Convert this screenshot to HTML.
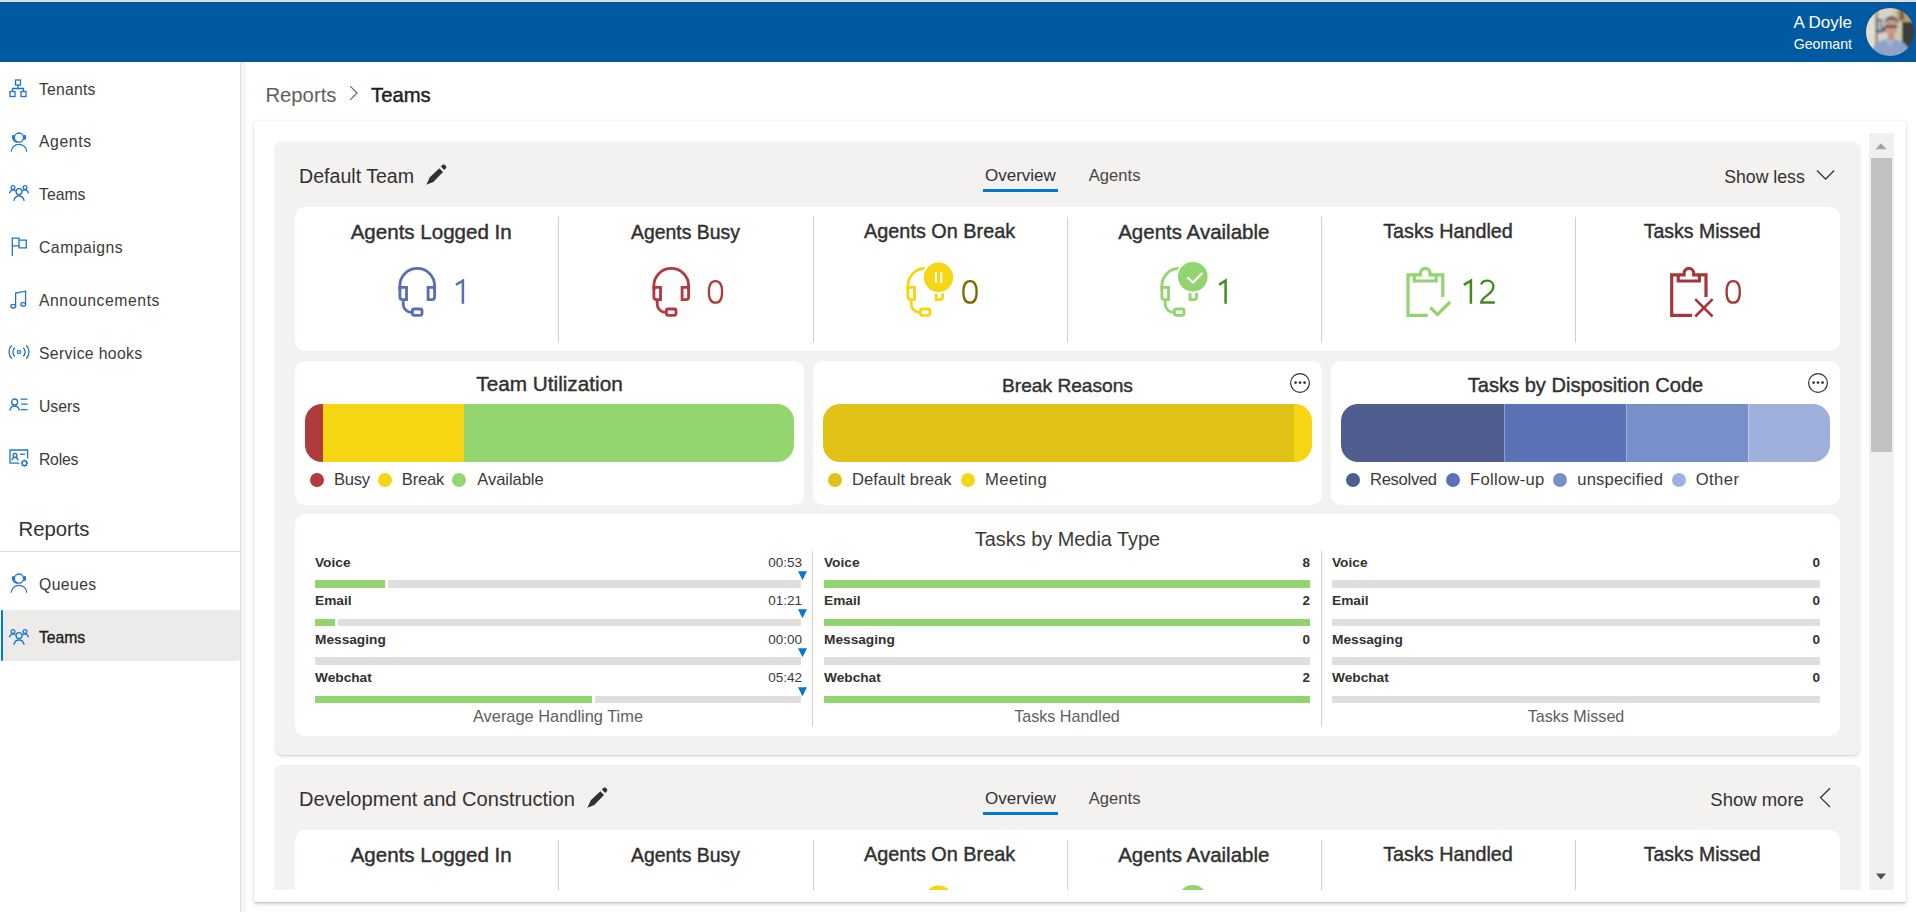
<!DOCTYPE html>
<html><head><meta charset="utf-8"><title>Teams</title>
<style>
html,body{margin:0;padding:0;}
body{width:1916px;height:912px;position:relative;overflow:hidden;background:#fff;font-family:"Liberation Sans",sans-serif;}
.t{position:absolute;line-height:1;white-space:pre;}
.r{position:absolute;}
</style></head><body>
<div class="r" style="left:0px;top:0px;width:1916px;height:2px;background:#dedfe1;"></div>
<div class="r" style="left:0px;top:2px;width:1916px;height:60px;background:#005aa1;"></div>
<div class="t" style="left:652.00px;width:1200px;text-align:right;top:14.31px;font-size:17px;font-weight:400;color:#ffffff;">A Doyle</div>
<div class="t" style="left:652.00px;width:1200px;text-align:right;top:36.88px;font-size:14.2px;font-weight:400;color:#ffffff;">Geomant</div>
<svg class="r" style="left:1866px;top:8px;" width="48" height="48" viewBox="0 0 48 48">
<defs><clipPath id="av"><circle cx="24" cy="24" r="24"/></clipPath><filter id="bl"><feGaussianBlur stdDeviation="0.8"/></filter></defs>
<g clip-path="url(#av)"><g filter="url(#bl)">
<rect x="-2" y="-2" width="52" height="52" fill="#cfc6b1"/>
<rect x="-2" y="-2" width="12" height="52" fill="#e3ddd0"/>
<rect x="9" y="-2" width="3" height="52" fill="#9d9384"/>
<rect x="12" y="-2" width="14" height="52" fill="#d8d3c6"/>
<rect x="10.5" y="11" width="6" height="14" fill="#55687a"/>
<rect x="11.5" y="13" width="4" height="9" fill="#a9b4bd"/>
<rect x="31" y="-2" width="19" height="16" fill="#b59a6e"/>
<rect x="34" y="-2" width="4" height="14" fill="#7b5f3a"/>
<rect x="36" y="14" width="14" height="30" fill="#3e3e3c"/>
<path d="M3 50 C5 38 12 33 19 31.5 L24 30 L29 31.5 C37 33 43 37 46 50 Z" fill="#8fa3c9"/>
<path d="M19 31.5 L24 38 L29 31.5 Z" fill="#a8b7d6"/>
<rect x="22" y="26" width="6" height="6" fill="#c08f80"/>
<ellipse cx="25" cy="19.5" rx="6.2" ry="8" fill="#c9988a"/>
<path d="M18.4 17 C18 10 22 8 25.5 8 C29.5 8 32.5 10.5 31.8 17 C30.5 13 28 12 25 12 C22 12 19.5 13 18.4 17Z" fill="#6e6963"/>
<rect x="18.5" y="17.2" width="13" height="2.6" rx="1" fill="#3b3835" opacity=".75"/>
<rect x="16.8" y="19" width="2" height="5" fill="#2d2d2d"/>
</g></g></svg>
<div class="r" style="left:240px;top:62px;width:1px;height:850px;background:#e1dfdd;"></div>
<div class="r" style="left:241px;top:62px;width:8px;height:850px;background:linear-gradient(90deg,rgba(0,0,0,.05),rgba(0,0,0,0));"></div>
<div class="t" style="left:39.00px;top:81.57px;font-size:15.75px;font-weight:400;color:#3b3a39;letter-spacing:0.2px;">Tenants</div>
<div class="t" style="left:39.00px;top:134.47px;font-size:15.75px;font-weight:400;color:#3b3a39;letter-spacing:0.6px;">Agents</div>
<div class="t" style="left:39.00px;top:187.37px;font-size:15.75px;font-weight:400;color:#3b3a39;letter-spacing:0px;">Teams</div>
<div class="t" style="left:39.00px;top:240.27px;font-size:15.75px;font-weight:400;color:#3b3a39;letter-spacing:0.5px;">Campaigns</div>
<div class="t" style="left:39.00px;top:293.17px;font-size:15.75px;font-weight:400;color:#3b3a39;letter-spacing:0.55px;">Announcements</div>
<div class="t" style="left:39.00px;top:346.07px;font-size:15.75px;font-weight:400;color:#3b3a39;letter-spacing:0.35px;">Service hooks</div>
<div class="t" style="left:39.00px;top:398.97px;font-size:15.75px;font-weight:400;color:#3b3a39;letter-spacing:0px;">Users</div>
<div class="t" style="left:39.00px;top:451.87px;font-size:15.75px;font-weight:400;color:#3b3a39;letter-spacing:-0.25px;">Roles</div>
<svg class="r" style="left:8px;top:78px;" width="22" height="22" viewBox="0 0 22 22"><g fill="none" stroke="#1f74c6" stroke-width="1.3">
<rect x="7.5" y="2" width="5" height="5"/><rect x="2" y="13.5" width="5" height="5"/><rect x="13" y="13.5" width="5" height="5"/>
<path d="M10 7v3.5M4.5 13.5v-3h11v3"/></g></svg>
<svg class="r" style="left:8px;top:131px;" width="22" height="22" viewBox="0 0 22 22"><g fill="none" stroke="#1f74c6" stroke-width="1.3">
<circle cx="11" cy="6.6" r="4.6"/>
<path d="M3.2 20.6c.6-4.4 3.8-7.2 7.8-7.2s7.2 2.8 7.8 7.2"/>
<rect x="4.6" y="4.6" width="1.4" height="3.6" rx=".7"/><rect x="16" y="4.6" width="1.4" height="3.6" rx=".7"/>
<path d="M5.4 8.4c.4 1.8 1.6 2.4 3.2 2.4"/></g><circle cx="8.8" cy="10.8" r="1" fill="#1f74c6"/></svg>
<svg class="r" style="left:8px;top:184px;" width="22" height="20" viewBox="0 0 22 20"><g fill="none" stroke="#1f74c6" stroke-width="1.3">
<circle cx="5" cy="3.6" r="1.9"/><circle cx="17" cy="3.6" r="1.9"/><circle cx="11" cy="7.6" r="3"/>
<path d="M1.4 9.2c.8-2.4 2-3.4 3.6-3.4 1.1 0 2 .5 2.6 1.4M20.6 9.2c-.8-2.4-2-3.4-3.6-3.4-1.1 0-2 .5-2.6 1.4"/>
<path d="M5.8 16.8c.7-3 2.6-4.8 5.2-4.8s4.5 1.8 5.2 4.8"/></g></svg>
<svg class="r" style="left:8px;top:236px;" width="22" height="22" viewBox="0 0 22 22"><g fill="none" stroke="#1f74c6" stroke-width="1.3">
<path d="M4.3 20V2.2h6.7v7.6H4.3"/><path d="M11 4.2h7.3v7.7H11V9.8"/></g></svg>
<svg class="r" style="left:8px;top:289px;" width="22" height="22" viewBox="0 0 22 22"><g fill="none" stroke="#1f74c6" stroke-width="1.3">
<ellipse cx="5.2" cy="17.2" rx="2.4" ry="1.8"/><ellipse cx="15.2" cy="15.4" rx="2.4" ry="1.8"/>
<path d="M7.6 17.2V4l10-1.8v13.2"/></g></svg>
<svg class="r" style="left:8px;top:344px;" width="22" height="18" viewBox="0 0 22 18"><g fill="none" stroke="#1f74c6" stroke-width="1.3">
<circle cx="11" cy="8" r="1.6"/>
<path d="M6.7 3.7a6 6 0 0 0 0 8.6M15.3 3.7a6 6 0 0 1 0 8.6"/>
<path d="M3.8 1.2a9.6 9.6 0 0 0 0 13.6M18.2 1.2a9.6 9.6 0 0 1 0 13.6"/></g></svg>
<svg class="r" style="left:8px;top:397px;" width="22" height="16" viewBox="0 0 22 16"><g fill="none" stroke="#1f74c6" stroke-width="1.3">
<circle cx="6.6" cy="5" r="3"/><path d="M1.8 13.6c.6-3 2.4-4.6 4.8-4.6s4.2 1.6 4.8 4.6"/>
<path d="M12.6 2.2h7M13 7.2h6.6M12.6 12.6h7"/></g></svg>
<svg class="r" style="left:8px;top:448px;" width="22" height="20" viewBox="0 0 22 20"><g fill="none" stroke="#1f74c6" stroke-width="1.3">
<path d="M11.4 15.2H2V2h17.6v8.5"/>
<circle cx="7" cy="7.4" r="1.9"/><path d="M3.8 12.4c.5-2 1.6-3 3.2-3s2.7 1 3.2 3"/>
<path d="M12 6.3h5"/>
<circle cx="16.4" cy="15.2" r="2.3"/>
<path d="M16.4 11.6v1.2M16.4 17.6v1.2M12.8 15.2h1.2M18.8 15.2h1.2M13.9 12.7l.8.8M18.1 16.9l.8.8M13.9 17.7l.8-.8M18.1 13.5l.8-.8"/></g></svg>
<div class="t" style="left:18.50px;top:518.62px;font-size:20.3px;font-weight:400;color:#323130;">Reports</div>
<div class="r" style="left:0px;top:551px;width:240px;height:1px;background:#e1dfdd;"></div>
<div class="t" style="left:39.00px;top:577.27px;font-size:15.75px;font-weight:400;color:#3b3a39;letter-spacing:0.4px;">Queues</div>
<svg class="r" style="left:8px;top:572px;" width="22" height="22" viewBox="0 0 22 22"><g fill="none" stroke="#1f74c6" stroke-width="1.3">
<circle cx="11" cy="6.6" r="4.6"/>
<path d="M3.2 20.6c.6-4.4 3.8-7.2 7.8-7.2s7.2 2.8 7.8 7.2"/>
<rect x="4.6" y="4.6" width="1.4" height="3.6" rx=".7"/><rect x="16" y="4.6" width="1.4" height="3.6" rx=".7"/>
<path d="M5.4 8.4c.4 1.8 1.6 2.4 3.2 2.4"/></g><circle cx="8.8" cy="10.8" r="1" fill="#1f74c6"/></svg>
<div class="r" style="left:2px;top:610px;width:238px;height:51px;background:#edebe9;border-radius:0 3px 3px 0;"></div>
<div class="r" style="left:1px;top:610px;width:2px;height:51px;background:#0078d4;border-radius:1px;"></div>
<div class="t" style="left:39.00px;top:630.11px;font-size:15.7px;font-weight:400;color:#201f1e;-webkit-text-stroke:0.35px #201f1e;">Teams</div>
<svg class="r" style="left:8px;top:628px;" width="22" height="20" viewBox="0 0 22 20"><g fill="none" stroke="#1f74c6" stroke-width="1.3">
<circle cx="5" cy="3.6" r="1.9"/><circle cx="17" cy="3.6" r="1.9"/><circle cx="11" cy="7.6" r="3"/>
<path d="M1.4 9.2c.8-2.4 2-3.4 3.6-3.4 1.1 0 2 .5 2.6 1.4M20.6 9.2c-.8-2.4-2-3.4-3.6-3.4-1.1 0-2 .5-2.6 1.4"/>
<path d="M5.8 16.8c.7-3 2.6-4.8 5.2-4.8s4.5 1.8 5.2 4.8"/></g></svg>
<div class="t" style="left:265.40px;top:84.62px;font-size:20.3px;font-weight:400;color:#605e5c;">Reports</div>
<svg class="r" style="left:348px;top:85px;" width="12" height="16" viewBox="0 0 12 16"><path d="M2.2 1.2l6.8 6.8-6.8 6.8" fill="none" stroke="#605e5c" stroke-width="1.1"/></svg>
<div class="t" style="left:371.00px;top:84.62px;font-size:20.3px;font-weight:400;color:#201f1e;-webkit-text-stroke:0.42px #201f1e;">Teams</div>
<div class="r" style="left:254px;top:121px;width:1652px;height:781px;background:#fff;border-radius:2px;box-shadow:0 1.6px 3.6px rgba(0,0,0,.13),0 0.3px 0.9px rgba(0,0,0,.11),0 3px 9px rgba(0,0,0,.05);"></div>
<div class="r" style="left:1869px;top:133px;width:25px;height:757px;background:#f0f0f0;"></div>
<div class="r" style="left:1871px;top:158px;width:21px;height:294px;background:#c1c1c1;"></div>
<svg class="r" style="left:1875px;top:141px;" width="12" height="10" viewBox="0 0 12 10"><path d="M0.5 8.2L6 2.2 11.5 8.2Z" fill="#a3a3a3"/></svg>
<svg class="r" style="left:1875px;top:871px;" width="12" height="10" viewBox="0 0 12 10"><path d="M1 2.5L6 8.5 11 2.5Z" fill="#505050"/></svg>
<div class="r" style="left:254px;top:133px;width:1614px;height:757px;overflow:hidden;">
<div class="r" style="left:21px;top:9px;width:1585px;height:613px;background:#f3f2f1;border-radius:8px;box-shadow:0 1.2px 3.6px rgba(0,0,0,.10),0 .3px .9px rgba(0,0,0,.08);"></div>
<div class="t" style="left:45.00px;top:33.91px;font-size:19.6px;font-weight:400;color:#323130;">Default Team</div>
<svg class="r" style="left:172px;top:31px;" width="22" height="22" viewBox="0 0 22 22"><path d="M0.3 20.7L3.8 13.3 13.3 4.2 17 8 7.3 17.9Z M14.8 2.6L17 .6C18.8 .2 20.6 2 20.3 3.8L18.2 6Z" fill="#323130"/></svg>
<div class="t" style="left:731.00px;top:33.81px;font-size:17px;font-weight:400;color:#323130;">Overview</div>
<div class="r" style="left:729px;top:56px;width:75px;height:3px;background:#0078d4;"></div>
<div class="t" style="left:834.80px;top:34.75px;font-size:16.6px;font-weight:400;color:#484644;">Agents</div>
<div class="t" style="left:1470.20px;top:35.62px;font-size:17.7px;font-weight:400;color:#323130;">Show less</div>
<svg class="r" style="left:1562px;top:36px;" width="20" height="14" viewBox="0 0 20 14"><path d="M1 1.5l8.6 8.6 8.6-8.6" fill="none" stroke="#323130" stroke-width="1.3"/></svg>
<div class="r" style="left:41px;top:74px;width:1545px;height:144px;background:#fff;border-radius:10px;"></div>
<div class="t" style="left:-422.80px;width:1200px;text-align:center;top:88.60px;font-size:20.55px;font-weight:400;color:#323130;-webkit-text-stroke:0.42px #323130;">Agents Logged In</div>
<div class="r" style="left:304px;top:84px;width:1px;height:125px;background:#d2d0ce;"></div>
<div class="t" style="left:-168.60px;width:1200px;text-align:center;top:89.58px;font-size:19.4px;font-weight:400;color:#323130;-webkit-text-stroke:0.42px #323130;">Agents Busy</div>
<div class="r" style="left:559px;top:84px;width:1px;height:125px;background:#d2d0ce;"></div>
<div class="t" style="left:85.60px;width:1200px;text-align:center;top:89.20px;font-size:19.85px;font-weight:400;color:#323130;-webkit-text-stroke:0.42px #323130;">Agents On Break</div>
<div class="r" style="left:813px;top:84px;width:1px;height:125px;background:#d2d0ce;"></div>
<div class="t" style="left:339.80px;width:1200px;text-align:center;top:88.65px;font-size:20.5px;font-weight:400;color:#323130;-webkit-text-stroke:0.42px #323130;">Agents Available</div>
<div class="r" style="left:1067px;top:84px;width:1px;height:125px;background:#d2d0ce;"></div>
<div class="t" style="left:594.00px;width:1200px;text-align:center;top:89.28px;font-size:19.75px;font-weight:400;color:#323130;-webkit-text-stroke:0.42px #323130;">Tasks Handled</div>
<div class="r" style="left:1321px;top:84px;width:1px;height:125px;background:#d2d0ce;"></div>
<div class="t" style="left:848.20px;width:1200px;text-align:center;top:89.49px;font-size:19.5px;font-weight:400;color:#323130;-webkit-text-stroke:0.42px #323130;">Tasks Missed</div>
<svg class="r" style="left:136px;top:127px;" width="60" height="62" viewBox="0 0 60 62"><g fill="none" stroke="#5a6eb3" stroke-width="2.85" stroke-linejoin="miter">
<path d="M9.9 30V25.7A17.35 17.35 0 0 1 44.6 25.7V30"/>
<path d="M9.9 27.4H16.5V39.6H12.6Q9.9 39.6 9.9 36.9Z"/>
<path d="M44.6 27.4H38.1V39.6H41.9Q44.6 39.6 44.6 36.9Z"/>
<path d="M13.2 40.5V44.3A8.2 8.2 0 0 0 21.6 52.3"/>
<rect x="22.4" y="49" width="9.6" height="6.3" rx="1.7"/></g></svg>
<svg class="r" style="left:-254px;top:-133px;" width="1916" height="320" viewBox="0 0 1916 320"><path d="M455.9 284.8L462.9 280.6V303.8" fill="none" stroke="#5a6eb3" stroke-width="2.5" stroke-linejoin="miter"/></svg>
<svg class="r" style="left:390px;top:127px;" width="60" height="62" viewBox="0 0 60 62"><g fill="none" stroke="#b03a3e" stroke-width="2.85" stroke-linejoin="miter">
<path d="M9.9 30V25.7A17.35 17.35 0 0 1 44.6 25.7V30"/>
<path d="M9.9 27.4H16.5V39.6H12.6Q9.9 39.6 9.9 36.9Z"/>
<path d="M44.6 27.4H38.1V39.6H41.9Q44.6 39.6 44.6 36.9Z"/>
<path d="M13.2 40.5V44.3A8.2 8.2 0 0 0 21.6 52.3"/>
<rect x="22.4" y="49" width="9.6" height="6.3" rx="1.7"/></g></svg>
<svg class="r" style="left:-254px;top:-133px;" width="1916" height="320" viewBox="0 0 1916 320"><path d="M715.5 281.1C720.2 281.1 722.1 285.6 722.1 291.9C722.1 298.2 720.2 302.7 715.5 302.7C710.8 302.7 708.9 298.2 708.9 291.9C708.9 285.6 710.8 281.1 715.5 281.1Z" fill="none" stroke="#b03a3e" stroke-width="2.3"/></svg>
<svg class="r" style="left:644px;top:122px;" width="70" height="66" viewBox="0 0 70 66"><defs><mask id="mb0"><rect width="70" height="66" fill="#fff"/><circle cx="40.5" cy="22.3" r="16.6" fill="#000"/></mask></defs>
<g mask="url(#mb0)"><g transform="translate(0,5)"><g fill="none" stroke="#f6d613" stroke-width="2.85" stroke-linejoin="miter">
<path d="M9.9 30V25.7A17.35 17.35 0 0 1 44.6 25.7V30"/>
<path d="M9.9 27.4H16.5V39.6H12.6Q9.9 39.6 9.9 36.9Z"/>
<path d="M44.6 27.4H38.1V39.6H41.9Q44.6 39.6 44.6 36.9Z"/>
<path d="M13.2 40.5V44.3A8.2 8.2 0 0 0 21.6 52.3"/>
<rect x="22.4" y="49" width="9.6" height="6.3" rx="1.7"/></g></g></g>
<circle cx="40.5" cy="22.3" r="14.7" fill="#f6d613"/>
<rect x="36.9" y="16.9" width="2" height="11" fill="#fff"/><rect x="42.3" y="16.9" width="2" height="11" fill="#fff"/></svg>
<svg class="r" style="left:-254px;top:-133px;" width="1916" height="320" viewBox="0 0 1916 320"><path d="M970 281.1C974.7 281.1 976.6 285.6 976.6 291.9C976.6 298.2 974.7 302.7 970 302.7C965.3 302.7 963.4 298.2 963.4 291.9C963.4 285.6 965.3 281.1 970 281.1Z" fill="none" stroke="#7a6700" stroke-width="2.3"/></svg>
<svg class="r" style="left:898px;top:122px;" width="70" height="66" viewBox="0 0 70 66"><defs><mask id="ma0"><rect width="70" height="66" fill="#fff"/><circle cx="40.8" cy="21.7" r="16.6" fill="#000"/></mask></defs>
<g mask="url(#ma0)"><g transform="translate(0,5)"><g fill="none" stroke="#92d46f" stroke-width="2.85" stroke-linejoin="miter">
<path d="M9.9 30V25.7A17.35 17.35 0 0 1 44.6 25.7V30"/>
<path d="M9.9 27.4H16.5V39.6H12.6Q9.9 39.6 9.9 36.9Z"/>
<path d="M44.6 27.4H38.1V39.6H41.9Q44.6 39.6 44.6 36.9Z"/>
<path d="M13.2 40.5V44.3A8.2 8.2 0 0 0 21.6 52.3"/>
<rect x="22.4" y="49" width="9.6" height="6.3" rx="1.7"/></g></g></g>
<circle cx="40.8" cy="21.7" r="14.8" fill="#92d46f"/>
<path d="M35.3 22.3l5.7 5.2 9.3-9.4" fill="none" stroke="#fff" stroke-width="2.2"/></svg>
<svg class="r" style="left:-254px;top:-133px;" width="1916" height="320" viewBox="0 0 1916 320"><path d="M1219 284.8L1225.6 280.6V303.8" fill="none" stroke="#438c24" stroke-width="2.5" stroke-linejoin="miter"/></svg>
<svg class="r" style="left:1141px;top:127px;" width="60" height="62" viewBox="0 0 60 62"><g fill="none" stroke="#92d46f" stroke-width="3.2" stroke-linejoin="miter">
<path d="M32.8 55.3H13V14.8H25.5V13.2A4.8 4.8 0 0 1 35.1 13.2V14.8H47.8V37"/>
<path d="M19.3 16V21H41.1V16"/>
<path d="M35.3 47.5L42.4 54.6 55 42"/></g></svg>
<svg class="r" style="left:-254px;top:-133px;" width="1916" height="320" viewBox="0 0 1916 320"><path d="M1463.8 284.8L1470.9 280.6V303.8" fill="none" stroke="#3e8a1d" stroke-width="2.5" stroke-linejoin="miter"/><path d="M1481.0 24.4C1482.3999999999999 21.8 1484.8 20.7 1487.3 20.7C1490.8999999999999 20.7 1493.3999999999999 23.0 1493.3999999999999 26.6C1493.3999999999999 30.2 1491.2 32.4 1487.5 35.1C1483.1 38.3 1481.2 40.2 1481.2 42.5H1494.8" fill="none" stroke="#3e8a1d" stroke-width="2.3" transform="translate(0,260)"/></svg>
<svg class="r" style="left:1401px;top:127px;" width="70" height="62" viewBox="0 0 70 62"><g fill="none" stroke="#a8353a" stroke-width="3.2" stroke-linejoin="miter">
<path d="M37 55.3H16.7V14.8H29.05V13.2A4.8 4.8 0 0 1 38.65 13.2V14.8H51V37"/>
<path d="M23.2 16V21H44.4V16"/>
<path d="M40.2 39.2L57.6 56.5M57.6 39.2L40.2 56.5" stroke-width="2.6"/></g></svg>
<svg class="r" style="left:-254px;top:-133px;" width="1916" height="320" viewBox="0 0 1916 320"><path d="M1733.2 281.1C1737.9 281.1 1739.8 285.6 1739.8 291.9C1739.8 298.2 1737.9 302.7 1733.2 302.7C1728.5 302.7 1726.6000000000001 298.2 1726.6000000000001 291.9C1726.6000000000001 285.6 1728.5 281.1 1733.2 281.1Z" fill="none" stroke="#a8353a" stroke-width="2.3"/></svg>
<div class="r" style="left:41px;top:228px;width:509px;height:144px;background:#fff;border-radius:10px;"></div>
<div class="t" style="left:-304.50px;width:1200px;text-align:center;top:241.44px;font-size:20.75px;font-weight:400;color:#323130;-webkit-text-stroke:0.42px #323130;">Team Utilization</div>
<div class="r" style="left:51px;top:271px;width:489px;height:58px;border-radius:17px;overflow:hidden;display:flex;"><div style="width:18px;background:#b03a3e;flex:none;"></div><div style="width:141px;background:#f6d613;flex:none;"></div><div style="width:330px;background:#93d670;flex:none;"></div></div>
<div class="r" style="left:55.60000000000002px;top:340px;width:14px;height:14px;border-radius:50%;background:#b03a3e;"></div>
<div class="t" style="left:80.00px;top:338.75px;font-size:16.6px;font-weight:400;color:#3b3a39;letter-spacing:-0.3px;">Busy</div>
<div class="r" style="left:123.80000000000001px;top:340px;width:14px;height:14px;border-radius:50%;background:#f6d613;"></div>
<div class="t" style="left:147.80px;top:338.75px;font-size:16.6px;font-weight:400;color:#3b3a39;letter-spacing:-0.2px;">Break</div>
<div class="r" style="left:198.3px;top:340px;width:14px;height:14px;border-radius:50%;background:#93d670;"></div>
<div class="t" style="left:223.30px;top:338.75px;font-size:16.6px;font-weight:400;color:#3b3a39;letter-spacing:-0.08px;">Available</div>
<div class="r" style="left:559px;top:228px;width:509px;height:144px;background:#fff;border-radius:10px;"></div>
<div class="t" style="left:213.50px;width:1200px;text-align:center;top:242.79px;font-size:19.15px;font-weight:400;color:#323130;-webkit-text-stroke:0.42px #323130;">Break Reasons</div>
<div class="r" style="left:569px;top:271px;width:489px;height:58px;border-radius:17px;overflow:hidden;display:flex;"><div style="width:471px;background:#e0c216;flex:none;"></div><div style="width:18px;background:#f6d613;flex:none;"></div></div>
<div class="r" style="left:574px;top:340px;width:14px;height:14px;border-radius:50%;background:#e0c216;"></div>
<div class="t" style="left:598.00px;top:338.75px;font-size:16.6px;font-weight:400;color:#3b3a39;letter-spacing:0.08px;">Default break</div>
<div class="r" style="left:707px;top:340px;width:14px;height:14px;border-radius:50%;background:#f6d613;"></div>
<div class="t" style="left:731.00px;top:338.75px;font-size:16.6px;font-weight:400;color:#3b3a39;letter-spacing:0.45px;">Meeting</div>
<svg class="r" style="left:1034.8px;top:239px;" width="22" height="22" viewBox="0 0 22 22"><circle cx="11" cy="11" r="9.4" fill="none" stroke="#323130" stroke-width="1.2"/><circle cx="6.6" cy="10.6" r="1.35" fill="#323130"/><circle cx="11" cy="10.6" r="1.35" fill="#323130"/><circle cx="15.6" cy="10.6" r="1.35" fill="#323130"/></svg>
<div class="r" style="left:1077px;top:228px;width:509px;height:144px;background:#fff;border-radius:10px;"></div>
<div class="t" style="left:731.50px;width:1200px;text-align:center;top:242.00px;font-size:20.08px;font-weight:400;color:#323130;-webkit-text-stroke:0.42px #323130;">Tasks by Disposition Code</div>
<div class="r" style="left:1087px;top:271px;width:489px;height:58px;border-radius:17px;overflow:hidden;display:flex;"><div style="width:163px;background:#4f5d8f;flex:none;"></div><div style="width:122px;background:#5b72b6;flex:none;box-shadow:inset 1px 0 rgba(255,255,255,.3);"></div><div style="width:122px;background:#7890ca;flex:none;box-shadow:inset 1px 0 rgba(255,255,255,.3);"></div><div style="width:82px;background:#a0b0dc;flex:none;box-shadow:inset 1px 0 rgba(255,255,255,.3);"></div></div>
<div class="r" style="left:1092px;top:340px;width:14px;height:14px;border-radius:50%;background:#4f5d8f;"></div>
<div class="t" style="left:1116.00px;top:338.75px;font-size:16.6px;font-weight:400;color:#3b3a39;letter-spacing:-0.3px;">Resolved</div>
<div class="r" style="left:1191.5px;top:340px;width:14px;height:14px;border-radius:50%;background:#5b72b6;"></div>
<div class="t" style="left:1216.00px;top:338.75px;font-size:16.6px;font-weight:400;color:#3b3a39;letter-spacing:0.3px;">Follow-up</div>
<div class="r" style="left:1299.4px;top:340px;width:14px;height:14px;border-radius:50%;background:#7890ca;"></div>
<div class="t" style="left:1323.30px;top:338.75px;font-size:16.6px;font-weight:400;color:#3b3a39;letter-spacing:0.17px;">unspecified</div>
<div class="r" style="left:1417.5px;top:340px;width:14px;height:14px;border-radius:50%;background:#a0b0dc;"></div>
<div class="t" style="left:1441.70px;top:338.75px;font-size:16.6px;font-weight:400;color:#3b3a39;letter-spacing:0.45px;">Other</div>
<svg class="r" style="left:1552.8px;top:239px;" width="22" height="22" viewBox="0 0 22 22"><circle cx="11" cy="11" r="9.4" fill="none" stroke="#323130" stroke-width="1.2"/><circle cx="6.6" cy="10.6" r="1.35" fill="#323130"/><circle cx="11" cy="10.6" r="1.35" fill="#323130"/><circle cx="15.6" cy="10.6" r="1.35" fill="#323130"/></svg>
<div class="r" style="left:41px;top:381px;width:1545px;height:222px;background:#fff;border-radius:10px;"></div>
<div class="t" style="left:213.50px;width:1200px;text-align:center;top:396.95px;font-size:19.9px;font-weight:400;color:#3b3a39;">Tasks by Media Type</div>
<div class="r" style="left:558px;top:418px;width:1px;height:175px;background:#d2d0ce;"></div>
<div class="r" style="left:1067px;top:418px;width:1px;height:175px;background:#d2d0ce;"></div>
<div class="t" style="left:61.00px;top:422.60px;font-size:13.7px;font-weight:700;color:#323130;">Voice</div>
<div class="t" style="left:-652.00px;width:1200px;text-align:right;top:422.77px;font-size:13.5px;font-weight:400;color:#3b3a39;">00:53</div>
<div class="r" style="left:61px;top:447.0px;width:70px;height:7.6px;background:#92d46f;"></div>
<div class="r" style="left:133.5px;top:447.0px;width:413.5px;height:7.6px;background:#e1dfdd;"></div>
<svg class="r" style="left:543px;top:438px;" width="11" height="9" viewBox="0 0 11 9"><path d="M1 0.3H10L5.5 9.2Z" fill="#0078d4"/></svg>
<div class="t" style="left:61.00px;top:461.10px;font-size:13.7px;font-weight:700;color:#323130;">Email</div>
<div class="t" style="left:-652.00px;width:1200px;text-align:right;top:461.27px;font-size:13.5px;font-weight:400;color:#3b3a39;">01:21</div>
<div class="r" style="left:61px;top:485.5px;width:20px;height:7.6px;background:#92d46f;"></div>
<div class="r" style="left:83.5px;top:485.5px;width:463.5px;height:7.6px;background:#e1dfdd;"></div>
<svg class="r" style="left:543px;top:476px;" width="11" height="9" viewBox="0 0 11 9"><path d="M1 0.3H10L5.5 9.2Z" fill="#0078d4"/></svg>
<div class="t" style="left:61.00px;top:499.60px;font-size:13.7px;font-weight:700;color:#323130;">Messaging</div>
<div class="t" style="left:-652.00px;width:1200px;text-align:right;top:499.77px;font-size:13.5px;font-weight:400;color:#3b3a39;">00:00</div>
<div class="r" style="left:61px;top:524.0px;width:486px;height:7.6px;background:#e1dfdd;"></div>
<svg class="r" style="left:543px;top:515px;" width="11" height="9" viewBox="0 0 11 9"><path d="M1 0.3H10L5.5 9.2Z" fill="#0078d4"/></svg>
<div class="t" style="left:61.00px;top:538.10px;font-size:13.7px;font-weight:700;color:#323130;">Webchat</div>
<div class="t" style="left:-652.00px;width:1200px;text-align:right;top:538.27px;font-size:13.5px;font-weight:400;color:#3b3a39;">05:42</div>
<div class="r" style="left:61px;top:562.5px;width:277px;height:7.6px;background:#92d46f;"></div>
<div class="r" style="left:340.5px;top:562.5px;width:206.5px;height:7.6px;background:#e1dfdd;"></div>
<svg class="r" style="left:543px;top:554px;" width="11" height="9" viewBox="0 0 11 9"><path d="M1 0.3H10L5.5 9.2Z" fill="#0078d4"/></svg>
<div class="t" style="left:-296.00px;width:1200px;text-align:center;top:575.12px;font-size:16.4px;font-weight:400;color:#605e5c;">Average Handling Time</div>
<div class="t" style="left:570.00px;top:422.60px;font-size:13.7px;font-weight:700;color:#323130;">Voice</div>
<div class="t" style="left:-144.00px;width:1200px;text-align:right;top:422.77px;font-size:13.5px;font-weight:700;color:#323130;">8</div>
<div class="r" style="left:570px;top:447.0px;width:486px;height:7.6px;background:#92d46f;"></div>
<div class="t" style="left:570.00px;top:461.10px;font-size:13.7px;font-weight:700;color:#323130;">Email</div>
<div class="t" style="left:-144.00px;width:1200px;text-align:right;top:461.27px;font-size:13.5px;font-weight:700;color:#323130;">2</div>
<div class="r" style="left:570px;top:485.5px;width:486px;height:7.6px;background:#92d46f;"></div>
<div class="t" style="left:570.00px;top:499.60px;font-size:13.7px;font-weight:700;color:#323130;">Messaging</div>
<div class="t" style="left:-144.00px;width:1200px;text-align:right;top:499.77px;font-size:13.5px;font-weight:700;color:#323130;">0</div>
<div class="r" style="left:570px;top:524.0px;width:486px;height:7.6px;background:#e1dfdd;"></div>
<div class="t" style="left:570.00px;top:538.10px;font-size:13.7px;font-weight:700;color:#323130;">Webchat</div>
<div class="t" style="left:-144.00px;width:1200px;text-align:right;top:538.27px;font-size:13.5px;font-weight:700;color:#323130;">2</div>
<div class="r" style="left:570px;top:562.5px;width:486px;height:7.6px;background:#92d46f;"></div>
<div class="t" style="left:213.00px;width:1200px;text-align:center;top:575.37px;font-size:16.1px;font-weight:400;color:#605e5c;">Tasks Handled</div>
<div class="t" style="left:1078.00px;top:422.60px;font-size:13.7px;font-weight:700;color:#323130;">Voice</div>
<div class="t" style="left:366.00px;width:1200px;text-align:right;top:422.77px;font-size:13.5px;font-weight:700;color:#323130;">0</div>
<div class="r" style="left:1078px;top:447.0px;width:488px;height:7.6px;background:#e1dfdd;"></div>
<div class="t" style="left:1078.00px;top:461.10px;font-size:13.7px;font-weight:700;color:#323130;">Email</div>
<div class="t" style="left:366.00px;width:1200px;text-align:right;top:461.27px;font-size:13.5px;font-weight:700;color:#323130;">0</div>
<div class="r" style="left:1078px;top:485.5px;width:488px;height:7.6px;background:#e1dfdd;"></div>
<div class="t" style="left:1078.00px;top:499.60px;font-size:13.7px;font-weight:700;color:#323130;">Messaging</div>
<div class="t" style="left:366.00px;width:1200px;text-align:right;top:499.77px;font-size:13.5px;font-weight:700;color:#323130;">0</div>
<div class="r" style="left:1078px;top:524.0px;width:488px;height:7.6px;background:#e1dfdd;"></div>
<div class="t" style="left:1078.00px;top:538.10px;font-size:13.7px;font-weight:700;color:#323130;">Webchat</div>
<div class="t" style="left:366.00px;width:1200px;text-align:right;top:538.27px;font-size:13.5px;font-weight:700;color:#323130;">0</div>
<div class="r" style="left:1078px;top:562.5px;width:488px;height:7.6px;background:#e1dfdd;"></div>
<div class="t" style="left:722.00px;width:1200px;text-align:center;top:575.37px;font-size:16.1px;font-weight:400;color:#605e5c;">Tasks Missed</div>
<div class="r" style="left:21px;top:632px;width:1585px;height:613px;background:#f3f2f1;border-radius:8px;box-shadow:0 1.2px 3.6px rgba(0,0,0,.10),0 .3px .9px rgba(0,0,0,.08);"></div>
<div class="t" style="left:45.00px;top:656.49px;font-size:20.1px;font-weight:400;color:#323130;">Development and Construction</div>
<svg class="r" style="left:333px;top:654px;" width="22" height="22" viewBox="0 0 22 22"><path d="M0.3 20.7L3.8 13.3 13.3 4.2 17 8 7.3 17.9Z M14.8 2.6L17 .6C18.8 .2 20.6 2 20.3 3.8L18.2 6Z" fill="#323130"/></svg>
<div class="t" style="left:731.00px;top:656.81px;font-size:17px;font-weight:400;color:#323130;">Overview</div>
<div class="r" style="left:729px;top:679px;width:75px;height:3px;background:#0078d4;"></div>
<div class="t" style="left:834.80px;top:657.75px;font-size:16.6px;font-weight:400;color:#484644;">Agents</div>
<div class="t" style="left:1456.30px;top:657.94px;font-size:18.5px;font-weight:400;color:#323130;">Show more</div>
<svg class="r" style="left:1564px;top:654px;" width="14" height="22" viewBox="0 0 14 22"><path d="M12 1.2L2.6 10.6 12 20" fill="none" stroke="#323130" stroke-width="1.3"/></svg>
<div class="r" style="left:41px;top:697px;width:1545px;height:144px;background:#fff;border-radius:10px;"></div>
<div class="t" style="left:-422.80px;width:1200px;text-align:center;top:711.60px;font-size:20.55px;font-weight:400;color:#323130;-webkit-text-stroke:0.42px #323130;">Agents Logged In</div>
<div class="r" style="left:304px;top:707px;width:1px;height:125px;background:#d2d0ce;"></div>
<div class="t" style="left:-168.60px;width:1200px;text-align:center;top:712.58px;font-size:19.4px;font-weight:400;color:#323130;-webkit-text-stroke:0.42px #323130;">Agents Busy</div>
<div class="r" style="left:559px;top:707px;width:1px;height:125px;background:#d2d0ce;"></div>
<div class="t" style="left:85.60px;width:1200px;text-align:center;top:712.20px;font-size:19.85px;font-weight:400;color:#323130;-webkit-text-stroke:0.42px #323130;">Agents On Break</div>
<div class="r" style="left:813px;top:707px;width:1px;height:125px;background:#d2d0ce;"></div>
<div class="t" style="left:339.80px;width:1200px;text-align:center;top:711.65px;font-size:20.5px;font-weight:400;color:#323130;-webkit-text-stroke:0.42px #323130;">Agents Available</div>
<div class="r" style="left:1067px;top:707px;width:1px;height:125px;background:#d2d0ce;"></div>
<div class="t" style="left:594.00px;width:1200px;text-align:center;top:712.28px;font-size:19.75px;font-weight:400;color:#323130;-webkit-text-stroke:0.42px #323130;">Tasks Handled</div>
<div class="r" style="left:1321px;top:707px;width:1px;height:125px;background:#d2d0ce;"></div>
<div class="t" style="left:848.20px;width:1200px;text-align:center;top:712.49px;font-size:19.5px;font-weight:400;color:#323130;-webkit-text-stroke:0.42px #323130;">Tasks Missed</div>
<svg class="r" style="left:644px;top:745px;" width="70" height="20" viewBox="0 0 70 20"><circle cx="40.5" cy="22.3" r="14.7" fill="#f6d613"/></svg>
<svg class="r" style="left:898px;top:745px;" width="70" height="20" viewBox="0 0 70 20"><circle cx="40.8" cy="21.7" r="14.8" fill="#92d46f"/></svg>
</div>
</body></html>
